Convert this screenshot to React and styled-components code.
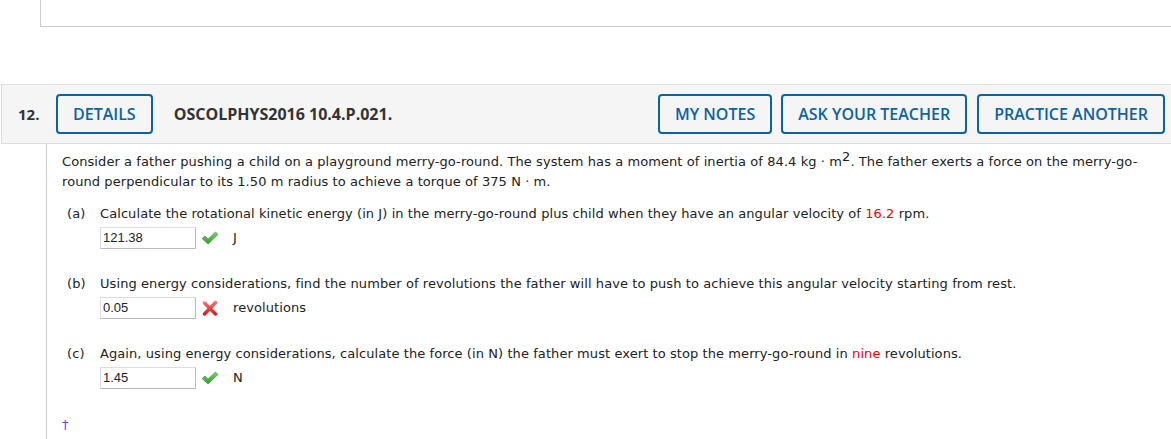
import React from 'react';
import styled, { createGlobalStyle } from 'styled-components';

const GlobalStyle = createGlobalStyle`
  body {
    margin: 0;
    background: #fff;
    font-family: "DejaVu Sans", Verdana, sans-serif;
  }
`;

const PrevBox = styled.div`
  margin-left: 40px;
  height: 26px;
  border-left: 1px solid #ccc;
  border-bottom: 1px solid #ccc;
`;

const Header = styled.div`
  display: flex;
  align-items: center;
  margin: 57px 0 0 1px;
  height: 58px;
  padding: 0 6px 0 16px;
  background: #f5f5f5;
  border: 1px solid #ddd;
  border-right: 0;
  font-family: "Open Sans", sans-serif;
`;

const Num = styled.span`
  font-size: 15px;
  font-weight: 700;
  color: #333;
  width: 38px;
`;

const Title = styled.span`
  font-size: 16px;
  font-weight: 700;
  color: #333;
  margin-left: 21px;
  flex: 1;
`;

const Btn = styled.button`
  font-family: "Open Sans", sans-serif;
  font-size: 16px;
  font-weight: 600;
  color: #0b62a4;
  background: transparent;
  border: 2px solid #0b62a4;
  border-radius: 4px;
  height: 40px;
  padding: 0 15px;
  margin-left: ${p => p.$gap || 0}px;
  cursor: pointer;
`;

const Content = styled.div`
  margin-left: 46px;
  border-left: 1px solid #ccc;
  padding: 8px 0 0 15px;
  min-height: 296px;
  color: #222;
  font-size: 13px;
  line-height: 20px;
  letter-spacing: 0.08px;
`;

const Para = styled.p`
  margin: 0;
  padding-right: 20px;
`;

const Sup = styled.sup`
  font-size: 13px;
  line-height: 0;
  vertical-align: 5px;
`;

const Part = styled.div`
  display: grid;
  grid-template-columns: 33px 1fr;
  margin-top: ${p => p.$first ? 12 : 25}px;
  padding-left: 5px;
`;

const Label = styled.span``;

const AnswerRow = styled.div`
  display: flex;
  align-items: center;
  margin-top: 3px;
  gap: 5px;
`;

const Input = styled.div`
  width: 96px;
  height: 22px;
  box-sizing: border-box;
  border: 1px solid #ddd;
  border-bottom-color: #bbb;
  border-right-color: #bbb;
  font-family: "Liberation Sans", Arial, sans-serif;
  font-size: 13px;
  letter-spacing: 0;
  line-height: 20px;
  padding-left: 2px;
  color: #222;
`;

const Unit = styled.span`
  margin-left: 9px;
`;

const Red = styled.span`
  color: #e00;
`;

const Dagger = styled.div`
  margin-top: 26px;
  color: #5b4fff;
  font-size: 13px;
`;

const Check = () => (
  <svg width="18" height="16" viewBox="0 0 18 16">
    <defs>
      <linearGradient id="cg" x1="0" y1="0" x2="0" y2="1">
        <stop offset="0" stopColor="#7fd46a" />
        <stop offset="1" stopColor="#2f9a2c" />
      </linearGradient>
    </defs>
    <path d="M1 8.5 L4 6 L7 9 L14.5 2 L17 4.5 L7 14 Z" fill="url(#cg)" stroke="#3c8f33" strokeWidth="0.6" />
  </svg>
);

const Cross = () => (
  <svg width="18" height="16" viewBox="0 0 18 16">
    <defs>
      <linearGradient id="xg" x1="0" y1="0" x2="0" y2="1">
        <stop offset="0" stopColor="#ff6b6b" />
        <stop offset="1" stopColor="#d91f1f" />
      </linearGradient>
    </defs>
    <path d="M3.5 3 L14.5 14 M14.5 2.5 L3.5 14" stroke="url(#xg)" strokeWidth="3.4" strokeLinecap="round" />
  </svg>
);

export default function App() {
  return (
    <>
      <GlobalStyle />
      <PrevBox />
      <Header>
        <Num>12.</Num>
        <Btn>DETAILS</Btn>
        <Title>OSCOLPHYS2016 10.4.P.021.</Title>
        <Btn>MY NOTES</Btn>
        <Btn $gap={9}>ASK YOUR TEACHER</Btn>
        <Btn $gap={10}>PRACTICE ANOTHER</Btn>
      </Header>
      <Content>
        <Para>
          Consider a father pushing a child on a playground merry-go-round. The system has a moment of inertia of 84.4 kg · m<Sup>2</Sup>. The father exerts a force on the merry-go-round perpendicular to its 1.50 m radius to achieve a torque of 375 N · m.
        </Para>
        <Part $first>
          <Label>(a)</Label>
          <div>
            Calculate the rotational kinetic energy (in J) in the merry-go-round plus child when they have an angular velocity of <Red>16.2</Red> rpm.
            <AnswerRow>
              <Input>121.38</Input>
              <Check />
              <Unit>J</Unit>
            </AnswerRow>
          </div>
        </Part>
        <Part>
          <Label>(b)</Label>
          <div>
            Using energy considerations, find the number of revolutions the father will have to push to achieve this angular velocity starting from rest.
            <AnswerRow>
              <Input>0.05</Input>
              <Cross />
              <Unit>revolutions</Unit>
            </AnswerRow>
          </div>
        </Part>
        <Part>
          <Label>(c)</Label>
          <div>
            Again, using energy considerations, calculate the force (in N) the father must exert to stop the merry-go-round in <Red>nine</Red> revolutions.
            <AnswerRow>
              <Input>1.45</Input>
              <Check />
              <Unit>N</Unit>
            </AnswerRow>
          </div>
        </Part>
        <Dagger>†</Dagger>
      </Content>
    </>
  );
}
